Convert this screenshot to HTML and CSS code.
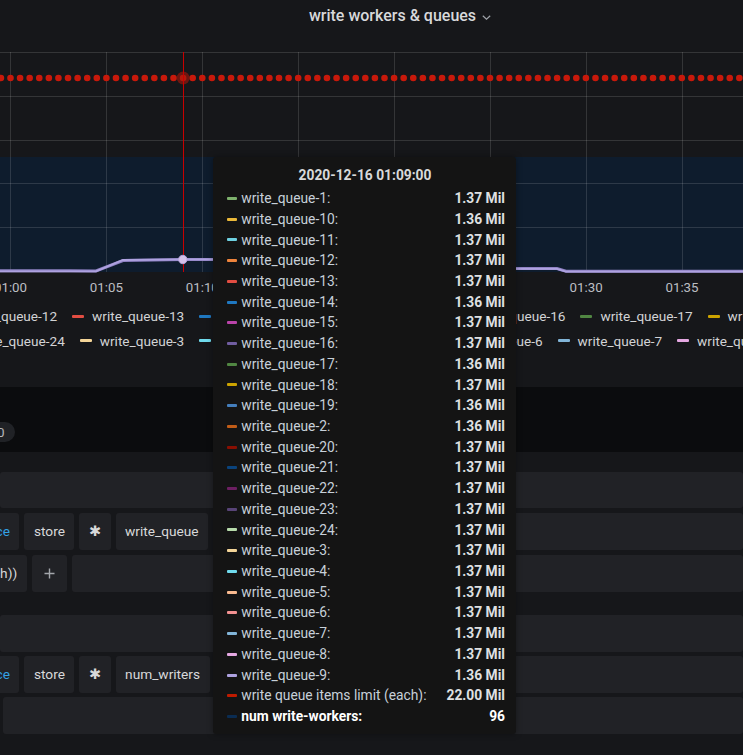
FILE: index.html
```html
<!DOCTYPE html>
<html>
<head>
<meta charset="utf-8">
<title>write workers &amp; queues</title>
<link rel="stylesheet" href="styles.css">
</head>
<body>
<header class="panel-header">
  <span class="panel-title">write workers &amp; queues</span>
  <svg class="chev" viewBox="0 0 9 5" width="9" height="5"><path d="M0.8 0.8 L4.5 4.2 L8.2 0.8" fill="none" stroke="#9fa3a9" stroke-width="1.2"/></svg>
</header>

<svg class="graph" width="743" height="272" viewBox="0 32 743 272">
  <rect x="0" y="157" width="743" height="115" fill="#0e1c2d"/>
  <g stroke="rgba(255,255,255,0.13)" stroke-width="1">
    <line x1="0" y1="52.5" x2="743" y2="52.5"/>
    <line x1="0" y1="96.5" x2="743" y2="96.5"/>
    <line x1="0" y1="140.5" x2="743" y2="140.5"/>
    <line x1="0" y1="183.5" x2="743" y2="183.5"/>
    <line x1="0" y1="227.5" x2="743" y2="227.5"/>
    <line x1="10.5" y1="52" x2="10.5" y2="272"/>
    <line x1="106.5" y1="52" x2="106.5" y2="272"/>
    <line x1="202.5" y1="52" x2="202.5" y2="272"/>
    <line x1="298.5" y1="52" x2="298.5" y2="272"/>
    <line x1="394.5" y1="52" x2="394.5" y2="272"/>
    <line x1="490.5" y1="52" x2="490.5" y2="272"/>
    <line x1="586.5" y1="52" x2="586.5" y2="272"/>
    <line x1="682.5" y1="52" x2="682.5" y2="272"/>
  </g>
  <path d="M0 270.8 H70 L96 271 L123 260.5 L183 259.5 H470 L500 268.5 H557 L566 271.2 H743" fill="none" stroke="#8f82c4" stroke-width="3"/>
  <path d="M0 271.3 H96 L123 260 L183 259.3 H470 L500 268.8 H557 L566 271.6 H743" fill="none" stroke="#aea2e0" stroke-width="1.8"/>
  <line x1="0.9" y1="78" x2="743" y2="78" stroke="#c8190b" stroke-width="6.6" stroke-linecap="round" stroke-dasharray="0 9.59"/>
  <circle cx="183.2" cy="78" r="6.5" fill="#a8170c" fill-opacity="0.6"/>
  <line x1="183.5" y1="52" x2="183.5" y2="272" stroke="#c80000" stroke-width="1"/>
  <circle cx="182.8" cy="259.5" r="4.2" fill="#d3c1ea" stroke="#b7a6df" stroke-width="1"/>
  <g class="ticks" text-anchor="middle">
    <text x="10.5" y="291.7">01:00</text>
    <text x="106.4" y="291.7">01:05</text>
    <text x="202.3" y="291.7">01:10</text>
    <text x="298.2" y="291.7">01:15</text>
    <text x="394.1" y="291.7">01:20</text>
    <text x="490" y="291.7">01:25</text>
    <text x="586.1" y="291.7">01:30</text>
    <text x="682" y="291.7">01:35</text>
  </g>
</svg>

<div class="legend">
  <div class="legend-row row1">
    <span class="li"><i class="q12"></i>write_queue-12</span>
    <span class="li"><i class="q13"></i>write_queue-13</span>
    <span class="li"><i class="q14"></i>write_queue-14</span>
    <span class="li"><i class="q15"></i>write_queue-15</span>
    <span class="li"><i class="q16"></i>write_queue-16</span>
    <span class="li"><i class="q17"></i>write_queue-17</span>
    <span class="li"><i class="q18"></i>write_queue-18</span>
    <span class="li"><i class="q19"></i>write_queue-19</span>
  </div>
  <div class="legend-row row2">
    <span class="li"><i class="q24"></i>write_queue-24</span>
    <span class="li"><i class="q3"></i>write_queue-3</span>
    <span class="li"><i class="q4"></i>write_queue-4</span>
    <span class="li"><i class="q5"></i>write_queue-5</span>
    <span class="li"><i class="q6"></i>write_queue-6</span>
    <span class="li"><i class="q7"></i>write_queue-7</span>
    <span class="li"><i class="q8"></i>write_queue-8</span>
    <span class="li"><i class="q9"></i>write_queue-9</span>
  </div>
</div>

<div class="band"><span class="pill">0</span></div>

<div class="query">
  <div class="qrow qhead"></div>
  <div class="qrow seg1"><span class="chip kw">ce</span><span class="chip">store</span><span class="chip star">&#x2731;</span><span class="chip">write_queue</span><span class="chip grow"></span></div>
  <div class="qrow seg2"><span class="chip">ach))</span><span class="chip plus"><svg viewBox="0 0 11 11" width="11" height="11"><path d="M5.5 0.5 V10.5 M0.5 5.5 H10.5" stroke="#a3a6ab" stroke-width="1.4" fill="none"/></svg></span><span class="chip grow"></span></div>
</div>
<div class="query q2">
  <div class="qrow qhead"></div>
  <div class="qrow seg1"><span class="chip kw">ce</span><span class="chip">store</span><span class="chip star">&#x2731;</span><span class="chip">num_writers</span><span class="chip grow"></span></div>
  <div class="qrow seg4"><span class="chip grow"></span></div>
</div>

<div class="tooltip">
  <div class="tt-title">2020-12-16 01:09:00</div>
  <div class="tt-row"><span class="tt-name"><i class="q1"></i>write_queue-1:</span><b>1.37 Mil</b></div>
  <div class="tt-row"><span class="tt-name"><i class="q10"></i>write_queue-10:</span><b>1.36 Mil</b></div>
  <div class="tt-row"><span class="tt-name"><i class="q11"></i>write_queue-11:</span><b>1.37 Mil</b></div>
  <div class="tt-row"><span class="tt-name"><i class="q12"></i>write_queue-12:</span><b>1.37 Mil</b></div>
  <div class="tt-row"><span class="tt-name"><i class="q13"></i>write_queue-13:</span><b>1.37 Mil</b></div>
  <div class="tt-row"><span class="tt-name"><i class="q14"></i>write_queue-14:</span><b>1.36 Mil</b></div>
  <div class="tt-row"><span class="tt-name"><i class="q15"></i>write_queue-15:</span><b>1.37 Mil</b></div>
  <div class="tt-row"><span class="tt-name"><i class="q16"></i>write_queue-16:</span><b>1.37 Mil</b></div>
  <div class="tt-row"><span class="tt-name"><i class="q17"></i>write_queue-17:</span><b>1.36 Mil</b></div>
  <div class="tt-row"><span class="tt-name"><i class="q18"></i>write_queue-18:</span><b>1.37 Mil</b></div>
  <div class="tt-row"><span class="tt-name"><i class="q19"></i>write_queue-19:</span><b>1.36 Mil</b></div>
  <div class="tt-row"><span class="tt-name"><i class="q2"></i>write_queue-2:</span><b>1.36 Mil</b></div>
  <div class="tt-row"><span class="tt-name"><i class="q20"></i>write_queue-20:</span><b>1.37 Mil</b></div>
  <div class="tt-row"><span class="tt-name"><i class="q21"></i>write_queue-21:</span><b>1.37 Mil</b></div>
  <div class="tt-row"><span class="tt-name"><i class="q22"></i>write_queue-22:</span><b>1.37 Mil</b></div>
  <div class="tt-row"><span class="tt-name"><i class="q23"></i>write_queue-23:</span><b>1.37 Mil</b></div>
  <div class="tt-row"><span class="tt-name"><i class="q24"></i>write_queue-24:</span><b>1.37 Mil</b></div>
  <div class="tt-row"><span class="tt-name"><i class="q3"></i>write_queue-3:</span><b>1.37 Mil</b></div>
  <div class="tt-row"><span class="tt-name"><i class="q4"></i>write_queue-4:</span><b>1.37 Mil</b></div>
  <div class="tt-row"><span class="tt-name"><i class="q5"></i>write_queue-5:</span><b>1.37 Mil</b></div>
  <div class="tt-row"><span class="tt-name"><i class="q6"></i>write_queue-6:</span><b>1.37 Mil</b></div>
  <div class="tt-row"><span class="tt-name"><i class="q7"></i>write_queue-7:</span><b>1.37 Mil</b></div>
  <div class="tt-row"><span class="tt-name"><i class="q8"></i>write_queue-8:</span><b>1.37 Mil</b></div>
  <div class="tt-row"><span class="tt-name"><i class="q9"></i>write_queue-9:</span><b>1.36 Mil</b></div>
  <div class="tt-row"><span class="tt-name"><i class="qlim"></i>write queue items limit (each):</span><b>22.00 Mil</b></div>
  <div class="tt-row hl"><span class="tt-name"><i class="qwk"></i>num write-workers:</span><b>96</b></div>
</div>
</body>
</html>
```

FILE: styles.css
```css
* { box-sizing: border-box; margin: 0; padding: 0; }
html, body { width: 743px; height: 755px; overflow: hidden; background: #16171a; }
body {
  font-family: Roboto, "Liberation Sans", Arial, sans-serif;
  color: #d8d9da;
  position: relative;
}

.panel-header {
  height: 32px;
  display: flex;
  align-items: center;
  justify-content: center;
  padding-left: 57px;
}
.panel-title { font-size: 16px; line-height: 32px; font-weight: 500; color: #d8d9da; }
.chev { margin-left: 6px; margin-top: 2px; display: block; }

.graph { display: block; }
.ticks { font-family: Roboto, "Liberation Sans", sans-serif; font-size: 13.3px; fill: #bcbec3; }

.legend { font-size: 13.6px; line-height: 24.5px; white-space: nowrap; color: #d2d3d5; }
.legend-row { display: flex; }
.row1 { margin-left: -55px; }
.row2 { margin-left: -47.3px; }
.li { display: flex; align-items: center; margin-right: 15px; flex: none; }
.li i { display: block; width: 12px; height: 3px; border-radius: 1px; margin-right: 8px; }

.band {
  margin-top: 34px;
  height: 65px;
  background: #0b0c0e;
  display: flex;
  align-items: flex-end;
  padding-bottom: 10px;
}
.pill {
  margin-left: -13px;
  height: 20px;
  line-height: 20px;
  padding: 0 10px;
  border-radius: 10px;
  background: #202226;
  font-size: 13.5px;
  color: #b4b7bc;
}

.query { display: flex; flex-direction: column; gap: 5px; margin-top: 20px; }
.query.q2 { margin-top: 23px; gap: 4px; }
.qrow { display: flex; gap: 5px; height: 37px; }
.qhead { height: 36px; background: #212226; border-radius: 3px; }
.q2 .qhead { height: 37px; }
.seg1 { margin-left: -14px; }
.seg2 { margin-left: -24px; }
.seg4 { padding-left: 3px; }

.chip {
  flex: none;
  background: #212226;
  border-radius: 3px;
  padding: 0 9.5px;
  font-size: 13.7px;
  line-height: 37px;
  white-space: nowrap;
  color: #d8d9da;
}
.chip.kw { color: #33a2e5; }
.chip.star { font-family: "DejaVu Sans", sans-serif; font-size: 14.5px; padding: 0 9.5px; }
.chip.plus { display: flex; align-items: center; padding: 0 12px; }
.chip.plus svg { display: block; }
.chip.grow { flex: 1; }

.tooltip {
  position: absolute;
  left: 213px;
  top: 157px;
  width: 303px;
  background: #141414;
  border-radius: 3px;
  padding: 7.6px 11px 7.6px 14px;
  font-size: 13.8px;
  line-height: 20.72px;
  box-shadow: 0 0 6px rgba(0,0,0,0.35);
}
.tt-title { text-align: center; font-weight: 700; color: #d8d9da; margin-bottom: 2.8px; margin-left: -2px; }
.tt-row { display: flex; justify-content: space-between; align-items: center; }
.tt-name { display: flex; align-items: center; color: #c7d0d9; }
.tt-name i { display: block; width: 10px; height: 3px; border-radius: 1px; margin-right: 4.3px; }
.tt-row b { font-weight: 700; color: #dfe0e2; }
.tt-row.hl .tt-name { font-weight: 700; color: #ffffff; }
.tt-row.hl b { color: #ffffff; }

.q1 { background: #7eb26d; }
i.q2 { background: #c15c17; }
.q3 { background: #f4d598; }
.q4 { background: #70dbed; }
.q5 { background: #f9ba8f; }
.q6 { background: #f29191; }
.q7 { background: #82b5d8; }
.q8 { background: #e5a8e2; }
.q9 { background: #aea2e0; }
.q10 { background: #eab839; }
.q11 { background: #6ed0e0; }
.q12 { background: #ef843c; }
.q13 { background: #e24d42; }
.q14 { background: #1f78c1; }
.q15 { background: #ba43a9; }
.q16 { background: #705da0; }
.q17 { background: #508642; }
.q18 { background: #cca300; }
.q19 { background: #447ebc; }
.q20 { background: #890f02; }
.q21 { background: #0a437c; }
.q22 { background: #6d1f62; }
.q23 { background: #584477; }
.q24 { background: #b7dbab; }
.qlim { background: #bf1b00; }
.qwk { background: #0a2c52; }
```
